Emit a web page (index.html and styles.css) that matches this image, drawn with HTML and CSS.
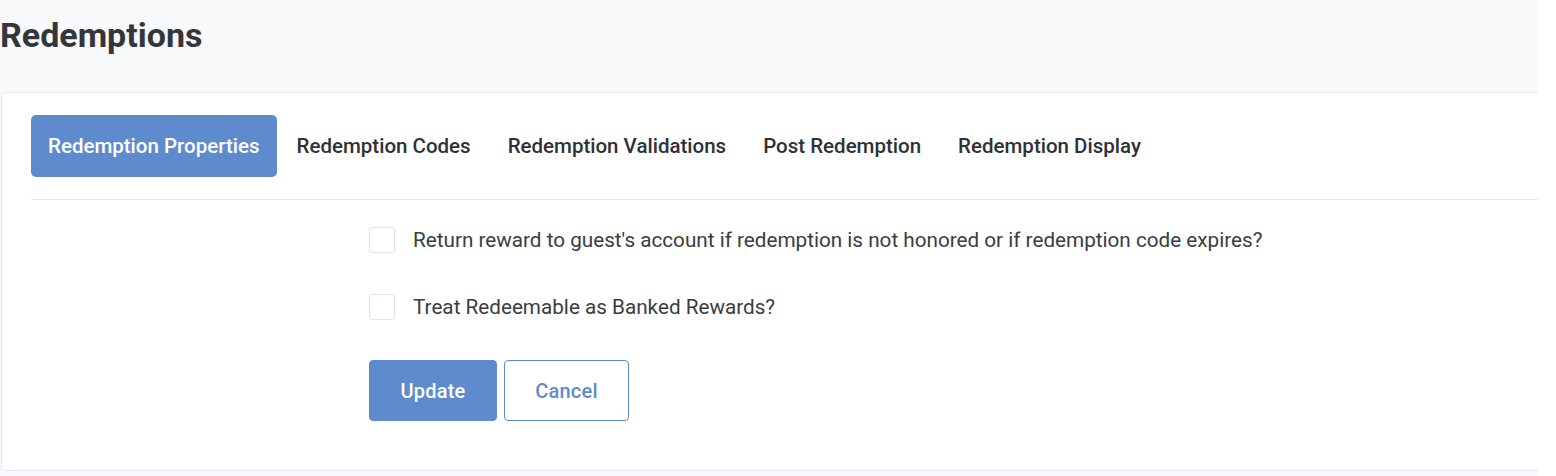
FILE: index.html
```html
<!DOCTYPE html>
<html lang="en">
<head>
<meta charset="utf-8">
<title>Redemptions</title>
<link rel="stylesheet" href="styles.css">
</head>
<body>
<div class="page">
  <h1 class="title">Redemptions</h1>
  <div class="card">
    <nav class="tabs">
      <a class="tab active">Redemption Properties</a>
      <a class="tab">Redemption Codes</a>
      <a class="tab">Redemption Validations</a>
      <a class="tab">Post Redemption</a>
      <a class="tab">Redemption Display</a>
    </nav>
    <div class="divider"></div>
    <form class="form">
      <label class="check-row">
        <span class="checkbox"></span>
        <span class="check-label">Return reward to guest's account if redemption is not honored or if redemption code expires?</span>
      </label>
      <label class="check-row">
        <span class="checkbox"></span>
        <span class="check-label">Treat Redeemable as Banked Rewards?</span>
      </label>
      <div class="actions">
        <button type="button" class="btn btn-primary">Update</button>
        <button type="button" class="btn btn-outline">Cancel</button>
      </div>
    </form>
  </div>
</div>
</body>
</html>
```
FILE: styles.css
```css
* { box-sizing: border-box; }
html, body { margin: 0; padding: 0; background: #ffffff; }
body { font-family: Roboto, "Liberation Sans", sans-serif; color: #33363b; }

.page {
  width: 1538px;
  height: 476px;
  background: #f8f9fb;
  padding-top: 15px;
}

.title {
  margin: 0;
  font-size: 34px;
  font-weight: 700;
  line-height: 40px;
  color: #33363b;
  height: 77px;
}

.card {
  margin-left: 1px;
  background: #ffffff;
  border: 1px solid #e6eaf0;
  border-right: none;
  border-radius: 5px 0 0 5px;
  padding: 22px 0 49px 29px;
}

.tabs {
  display: flex;
  gap: 3px;
}

.tab {
  display: flex;
  align-items: center;
  height: 62px;
  padding: 0 17px;
  font-size: 20.5px;
  font-weight: 500;
  color: #2e3136;
  border-radius: 5px;
  cursor: pointer;
}

.tab.active {
  background: #5e8bcd;
  color: #ffffff;
}

.divider {
  height: 1px;
  background: #e6eaf0;
  margin-top: 22px;
}

.form {
  padding-left: 338px;
  padding-top: 27px;
  display: flex;
  flex-direction: column;
}

.check-row {
  display: flex;
  align-items: center;
  gap: 18px;
  height: 26px;
  margin-bottom: 41px;
}

.checkbox {
  width: 26px;
  height: 26px;
  border: 1px solid #dfe4eb;
  border-radius: 3px;
  background: #fff;
  flex: none;
}

.check-label {
  font-size: 20.7px;
  color: #3a3d43;
  line-height: 26px;
}

.actions {
  display: flex;
  gap: 7px;
  margin-top: -1px;
}

.btn {
  height: 61px;
  border-radius: 4px;
  font-family: Roboto, "Liberation Sans", sans-serif;
  font-size: 20px;
  font-weight: 500;
  letter-spacing: 0.2px;
  cursor: pointer;
}

.btn-primary {
  width: 128px;
  background: #5e8bcd;
  border: 1px solid #5e8bcd;
  color: #ffffff;
}

.btn-outline {
  width: 125px;
  background: #ffffff;
  border: 1px solid #5e8bcd;
  color: #5e8bcd;
}
```
